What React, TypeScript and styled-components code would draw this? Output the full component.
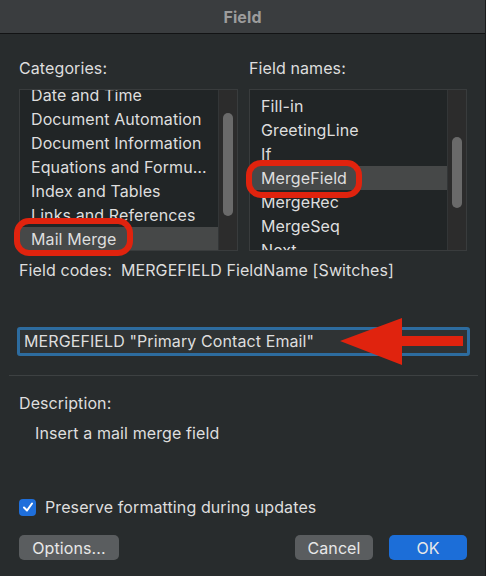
import React from 'react';
import styled, { createGlobalStyle } from 'styled-components';

const GlobalStyle = createGlobalStyle`
  html, body {
    margin: 0;
    padding: 0;
    background: #282c2d;
  }
  body {
    font-family: Inter, "Liberation Sans", Arial, sans-serif;
    color: #dedede;
  }
`;

const Window = styled.div`
  width: 486px;
  height: 576px;
  box-sizing: border-box;
  background: #282c2d;
  border-right: 1px solid #1b1d1e;
  overflow: hidden;
  font-size: 16px;
  letter-spacing: 0.1px;
`;

const TitleBar = styled.div`
  height: 33px;
  background: #3a3d3f;
  border-bottom: 1px solid #121314;
  display: flex;
  align-items: center;
  justify-content: center;
  font-size: 16px;
  font-weight: 700;
  color: #9c9c9c;
`;

const Body = styled.div`
  padding: 0 18px 0 19px;
`;

const Columns = styled.div`
  display: grid;
  grid-template-columns: 219px 218px;
  column-gap: 11px;
  margin-top: 24px;
`;

const Column = styled.div`
  position: relative;
`;

const Label = styled.div`
  line-height: 20px;
`;

const ListBox = styled.div`
  margin-top: 11px;
  height: 162px;
  box-sizing: border-box;
  border: 1px solid #393c3d;
  background: #212526;
  display: grid;
  grid-template-columns: 1fr 19px;
  overflow: hidden;
`;

const Rows = styled.div<{ $offset: number }>`
  margin-top: ${p => p.$offset}px;
  min-width: 0;
`;

const Row = styled.div<{ $selected?: boolean }>`
  height: 24px;
  line-height: 24px;
  padding-left: 11px;
  white-space: nowrap;
  background: ${p => (p.$selected ? '#464848' : 'transparent')};
`;

const Track = styled.div`
  background: #2c2c2c;
  border-left: 1px solid #333637;
  position: relative;
`;

const Thumb = styled.div<{ $top: number; $height: number }>`
  position: absolute;
  left: 4px;
  width: 10px;
  top: ${p => p.$top}px;
  height: ${p => p.$height}px;
  border-radius: 5px;
  background: #6a6a6a;
`;

const Ring = styled.div<{ $left: number; $top: number; $width: number }>`
  position: absolute;
  left: ${p => p.$left}px;
  top: ${p => p.$top}px;
  width: ${p => p.$width}px;
  height: 38px;
  box-sizing: border-box;
  border: 6px solid #e0230e;
  border-radius: 15px;
  pointer-events: none;
`;

const CodesLine = styled.div`
  margin-top: 9px;
  line-height: 20px;
  display: flex;
  gap: 9px;
`;

const InputWrap = styled.div`
  position: relative;
  margin: 47px 0 0 -2px;
  width: 453px;
`;

const CodeInput = styled.div`
  height: 29px;
  box-sizing: border-box;
  border: 3px solid #2d6c9f;
  border-radius: 3px;
  background: #2f3334;
  padding-left: 4px;
  line-height: 23px;
  white-space: nowrap;
`;

const Arrow = styled.svg`
  position: absolute;
  left: 323px;
  top: -9px;
`;

const Separator = styled.div`
  height: 1px;
  background: #3d4142;
  margin: 19px 7px 0 9px;
`;

const Section = styled.div`
  padding: 0 18px 0 19px;
`;

const DescLabel = styled.div`
  margin-top: 17px;
  line-height: 20px;
`;

const DescText = styled.div`
  margin-top: 10px;
  padding-left: 16px;
  line-height: 20px;
`;

const CheckRow = styled.label`
  margin-top: 54px;
  display: flex;
  align-items: center;
  gap: 9px;
  line-height: 20px;
`;

const CheckBox = styled.span`
  width: 17px;
  height: 17px;
  border-radius: 4px;
  background: #1f6fdb;
  display: flex;
  align-items: center;
  justify-content: center;
`;

const ButtonBar = styled.div`
  margin-top: 18px;
  display: flex;
  align-items: center;
`;

const Button = styled.button<{ $primary?: boolean }>`
  height: 25px;
  width: 78px;
  border: none;
  border-radius: 5px;
  background: ${p => (p.$primary ? '#1c6ed8' : '#5a5d5f')};
  color: #e8e8e8;
  font-family: inherit;
  font-size: 16px;
  letter-spacing: 0.1px;
  padding: 0;
`;

const WideButton = styled(Button)`
  width: 100px;
  margin-right: auto;
`;

const Spacer = styled.div`
  width: 16px;
`;

const categories = [
  'Date and Time',
  'Document Automation',
  'Document Information',
  'Equations and Formu…',
  'Index and Tables',
  'Links and References',
  'Mail Merge',
];

const fieldNames = ['Fill-in', 'GreetingLine', 'If', 'MergeField', 'MergeRec', 'MergeSeq', 'Next'];

interface ListProps {
  items: string[];
  selected: string;
  offset: number;
  thumbTop: number;
  thumbHeight: number;
}

const List: React.FC<ListProps> = ({ items, selected, offset, thumbTop, thumbHeight }) => (
  <ListBox>
    <Rows $offset={offset}>
      {items.map(item => (
        <Row key={item} $selected={item === selected}>
          {item}
        </Row>
      ))}
    </Rows>
    <Track>
      <Thumb $top={thumbTop} $height={thumbHeight} />
    </Track>
  </ListBox>
);

const App: React.FC = () => {
  return (
    <Window>
      <GlobalStyle />
      <TitleBar>Field</TitleBar>
      <Body>
        <Columns>
          <Column>
            <Label>Categories:</Label>
            <List items={categories} selected="Mail Merge" offset={-7} thumbTop={23} thumbHeight={103} />
            <Ring $left={-5} $top={160} $width={119} />
          </Column>
          <Column>
            <Label>Field names:</Label>
            <List items={fieldNames} selected="MergeField" offset={4} thumbTop={47} thumbHeight={71} />
            <Ring $left={-3} $top={102} $width={116} />
          </Column>
        </Columns>
        <CodesLine>
          <span>Field codes:</span>
          <span>MERGEFIELD FieldName [Switches]</span>
        </CodesLine>
        <InputWrap>
          <CodeInput>MERGEFIELD "Primary Contact Email"</CodeInput>
          <Arrow width="125" height="48" viewBox="0 0 125 48">
            <polygon points="0,23 62,0 62,18 123,18 123,28 62,28 62,47" fill="#e0230e" />
          </Arrow>
        </InputWrap>
      </Body>
      <Separator />
      <Section>
        <DescLabel>Description:</DescLabel>
        <DescText>Insert a mail merge field</DescText>
        <CheckRow>
          <CheckBox>
            <svg width="12" height="12" viewBox="0 0 12 12">
              <path d="M2 6.5 L5 9.5 L10 2.5" stroke="#fff" strokeWidth="2" fill="none" strokeLinecap="round" strokeLinejoin="round" />
            </svg>
          </CheckBox>
          Preserve formatting during updates
        </CheckRow>
        <ButtonBar>
          <WideButton>Options...</WideButton>
          <Button>Cancel</Button>
          <Spacer />
          <Button $primary>OK</Button>
        </ButtonBar>
      </Section>
    </Window>
  );
};

export default App;
